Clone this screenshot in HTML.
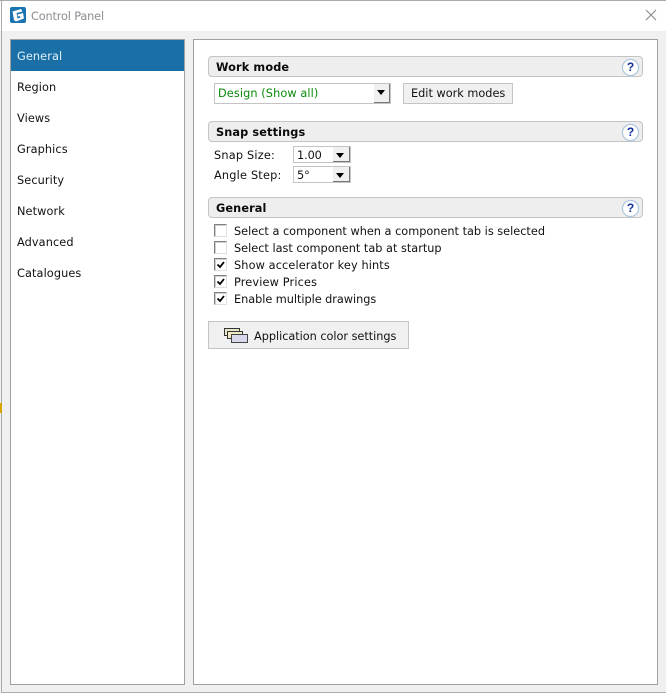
<!DOCTYPE html>
<html><head><meta charset="utf-8"><style>
html,body{margin:0;padding:0;background:#fff}
body{width:666px;height:693px;position:relative;overflow:hidden;font-family:"DejaVu Sans","Liberation Sans",sans-serif;font-size:11px;color:#111}
div{position:absolute;box-sizing:border-box}
.t{white-space:nowrap;line-height:14px;height:14px;font-size:11.3px}
.nav{left:17px;white-space:nowrap;line-height:14px;font-size:11.3px;letter-spacing:.1px;color:#111}
.hd{left:208px;width:435px;height:21px;background:#eee;border:1px solid #c4c4c4;border-radius:4px}
.hd b{position:absolute;left:7px;top:3px;font-size:11.3px;letter-spacing:.12px;line-height:15px;color:#0a0a0a}
.q{position:absolute;left:413px;top:2px;width:15px;height:15px;border-radius:50%;background:#fff;border:1px solid #a9c4dc;box-shadow:0 0 1px #b9d4ec;text-align:center;font:bold 12px/14px "Liberation Sans",sans-serif;color:#12309a}
.cb{left:214px;width:13px;height:13px;background:#fff;border:1px solid #808080;border-right-color:#e0e0e0;border-bottom-color:#e0e0e0;box-shadow:inset 1px 1px 0 #d0d0d0}
.combo{background:#fff;border:1px solid #c4c4c4}
.ar{position:absolute;right:0;top:0;bottom:0;width:16px;background:#f0f0f0;border-right:1px solid #777;border-bottom:1px solid #777}
.ar:after{content:"";position:absolute;left:3px;top:6px;border:4px solid transparent;border-top:5px solid #000;border-bottom:0}
</style></head><body>
<div style="left:0;top:0;width:666px;height:693px;background:#f0f0f0"></div>
<div style="left:0;top:0;width:666px;height:31px;background:#fff"></div>
<div style="left:0;top:0;width:666px;height:1px;background:#aaa"></div>
<div style="left:1px;top:0;width:1px;height:693px;background:#aaa"></div>
<div style="left:1px;top:692px;width:665px;height:1px;background:#aaa"></div>
<div style="left:0;top:403px;width:2px;height:10px;background:#d4a800"></div>

<svg style="position:absolute;left:10px;top:7px" width="16" height="16" viewBox="0 0 16 16"><rect width="16" height="16" rx="2" fill="#1a74b0"/><path d="M2.500 4.500 L11 2 L12.500 4.500 L6.500 6 L7.500 11.500 L10.500 10.500 L10 9 L8 9.500 L7.500 7.500 L13 6 L14 11.500 L6 14.500 L4 13 Z" fill="#fff"/></svg>
<div class="t" style="left:31px;top:10px;letter-spacing:-.15px;color:#8c8c94">Control Panel</div>
<svg style="position:absolute;left:645px;top:9px" width="12" height="12" viewBox="0 0 12 12"><path d="M1 1 L11 11 M11 1 L1 11" stroke="#8a8a8a" stroke-width="1.100" fill="none"/></svg>

<div style="left:10px;top:39px;width:175px;height:646px;background:#fff;border:1px solid #a0a0a0"></div>
<div style="left:11px;top:40px;width:173px;height:31px;background:#1a70a6"></div>
<div class="nav" style="top:50px;color:#dff0fa">General</div>
<div class="nav" style="top:81px">Region</div>
<div class="nav" style="top:112px">Views</div>
<div class="nav" style="top:143px">Graphics</div>
<div class="nav" style="top:174px">Security</div>
<div class="nav" style="top:205px">Network</div>
<div class="nav" style="top:236px">Advanced</div>
<div class="nav" style="top:267px">Catalogues</div>

<div style="left:193px;top:39px;width:465px;height:646px;background:#fff;border:1px solid #a0a0a0"></div>

<div class="hd" style="top:56px"><b>Work mode</b><span class="q">?</span></div>
<div class="combo" style="left:214px;top:83px;width:177px;height:21px"><span style="position:absolute;left:3px;top:3px;line-height:14px;color:#0a8a0a;white-space:nowrap;font-size:11.3px;letter-spacing:.1px">Design (Show all)</span><div class="ar"></div></div>
<div style="left:403px;top:83px;width:110px;height:21px;background:#f0f0f0;border:1px solid #c4c4c4;line-height:20px;font-size:11.3px;white-space:nowrap;padding-left:7px">Edit work modes</div>

<div class="hd" style="top:121px"><b>Snap settings</b><span class="q">?</span></div>
<div class="t" style="left:214px;top:149px;letter-spacing:.2px">Snap Size:</div>
<div class="combo" style="left:293px;top:146px;width:58px;height:17px"><span style="position:absolute;left:3px;top:2px;line-height:14px;font-size:11.3px;letter-spacing:-.1px">1.00</span><div class="ar" style="width:17px"></div></div>
<div class="t" style="left:214px;top:169px;letter-spacing:.2px">Angle Step:</div>
<div class="combo" style="left:293px;top:166px;width:58px;height:17px"><span style="position:absolute;left:3px;top:2px;line-height:14px;font-size:11.3px">5°</span><div class="ar" style="width:17px"></div></div>

<div class="hd" style="top:197px"><b>General</b><span class="q">?</span></div>

<div class="cb" style="top:224px"></div>
<div class="t" style="left:234px;top:225px">Select a component when a component tab is selected</div>
<div class="cb" style="top:241px"></div>
<div class="t" style="left:234px;top:242px">Select last component tab at startup</div>
<div class="cb" style="top:258px"><svg style="position:absolute;left:1px;top:1px" width="10" height="10" viewBox="0 0 10 10"><path d="M1.500 4.500 L4 7 L8 2" stroke="#000" stroke-width="1.800" fill="none"/></svg></div>
<div class="t" style="left:234px;top:259px;letter-spacing:.12px">Show accelerator key hints</div>
<div class="cb" style="top:275px"><svg style="position:absolute;left:1px;top:1px" width="10" height="10" viewBox="0 0 10 10"><path d="M1.500 4.500 L4 7 L8 2" stroke="#000" stroke-width="1.800" fill="none"/></svg></div>
<div class="t" style="left:234px;top:276px;letter-spacing:.15px">Preview Prices</div>
<div class="cb" style="top:292px"><svg style="position:absolute;left:1px;top:1px" width="10" height="10" viewBox="0 0 10 10"><path d="M1.500 4.500 L4 7 L8 2" stroke="#000" stroke-width="1.800" fill="none"/></svg></div>
<div class="t" style="left:234px;top:293px;letter-spacing:-.04px">Enable multiple drawings</div>

<div style="left:208px;top:321px;width:201px;height:28px;background:#f0f0f0;border:1px solid #c4c4c4"></div>
<svg style="position:absolute;left:224px;top:328px" width="25" height="15" viewBox="0 0 25 15"><rect x="0.500" y="0.500" width="15" height="7" fill="#e6e6c8" stroke="#333"/><rect x="3.500" y="3.500" width="15" height="7" fill="#f0e8c0" stroke="#333"/><rect x="7.500" y="6.500" width="16" height="8" fill="#d8d8ec" stroke="#444"/></svg>
<div class="t" style="left:254px;top:330px;letter-spacing:-.03px">Application color settings</div>
</body></html>
